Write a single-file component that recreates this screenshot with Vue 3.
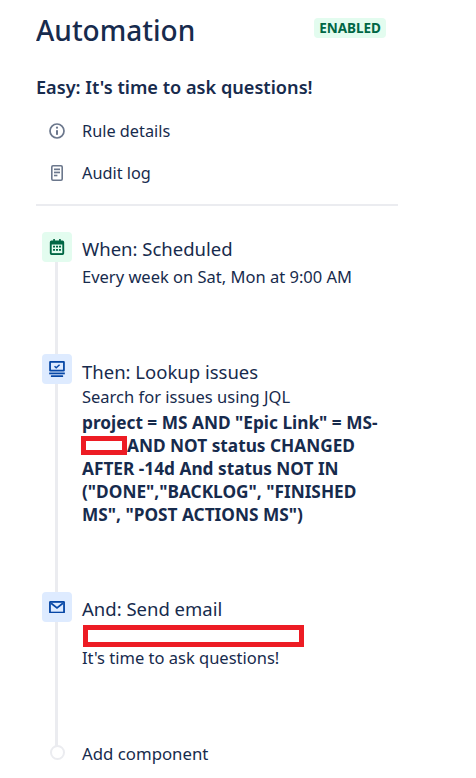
<script setup>
const menu = [
  { label: 'Rule details', icon: 'info' },
  { label: 'Audit log', icon: 'log' },
]
</script>

<template>
  <main class="panel">
    <header class="head">
      <h1>Automation</h1>
      <span class="lozenge">ENABLED</span>
    </header>
    <h2>Easy: It's time to ask questions!</h2>
    <nav class="menu">
      <div v-for="m in menu" :key="m.label" class="menu-row">
        <svg v-if="m.icon === 'info'" class="menu-icon" viewBox="0 0 18 18" width="18" height="18">
          <circle cx="9" cy="9" r="7" fill="none" stroke="#6b778c" stroke-width="1.7" />
          <rect x="8" y="8" width="2" height="5" rx=".8" fill="#6b778c" />
          <circle cx="9" cy="5.7" r="1.1" fill="#6b778c" />
        </svg>
        <svg v-else class="menu-icon" viewBox="0 0 18 18" width="18" height="18">
          <rect x="3.8" y="1.8" width="10.4" height="14.4" rx="1.2" fill="none" stroke="#6b778c" stroke-width="1.6" />
          <rect x="6" y="4.5" width="6" height="1.7" fill="#6b778c" />
          <rect x="6" y="7.6" width="6" height="1.7" fill="#6b778c" />
          <rect x="6" y="10.7" width="3.4" height="1.6" fill="#6b778c" />
        </svg>
        <span>{{ m.label }}</span>
      </div>
    </nav>
    <hr />
    <section class="timeline">
      <div class="rail"></div>
      <div class="step step-when">
        <div class="badge green">
          <svg viewBox="1.5 1 13 14.5" width="16" height="16">
            <path d="M3 2.4h1.6V1h1.5v1.4h3.8V1h1.5v1.4H13a1.5 1.5 0 0 1 1.5 1.5V14a1.5 1.5 0 0 1-1.5 1.5H3A1.5 1.5 0 0 1 1.500 14V3.900A1.500 1.500 0 0 1 3 2.400z" fill="#006644" />
            <rect x="3.200" y="6" width="9.600" height="7.800" fill="#e3fcef" />
            <path d="M4.400 7.200h1.800v1.600H4.400zM7.100 7.200h1.800v1.600H7.100zM9.800 7.200h1.800v1.600H9.800zM4.400 10.100h1.800v1.600H4.400zM7.100 10.100h1.800v1.600H7.100zM9.800 10.100h1.800v1.600H9.800z" fill="#006644" />
          </svg>
        </div>
        <div class="body">
          <div class="title">When: Scheduled</div>
          <div class="line">Every week on Sat, Mon at 9:00 AM</div>
        </div>
      </div>
      <div class="step step-then">
        <div class="badge blue">
          <svg viewBox="1 1 14 14.300" width="16" height="16">
            <rect x="1" y="1" width="14" height="9.400" rx="1" fill="#0747a6" />
            <rect x="2.600" y="2.600" width="10.800" height="6.200" fill="#deebff" />
            <path d="M5.800 5.700l1.500 1.400 3-2.700" fill="none" stroke="#0747a6" stroke-width="1.300" />
            <rect x="1" y="11.300" width="14" height="1.600" fill="#0747a6" />
            <rect x="2.500" y="13.700" width="11" height="1.600" rx=".5" fill="#0747a6" />
          </svg>
        </div>
        <div class="body">
          <div class="title">Then: Lookup issues</div>
          <div class="line search">Search for issues using JQL</div>
          <div class="jql">project = MS AND "Epic Link" = MS-<br /><span class="redact short"></span>AND NOT status CHANGED<br />AFTER -14d And status NOT IN<br />("DONE","BACKLOG", "FINISHED<br />MS", "POST ACTIONS MS")</div>
        </div>
      </div>
      <div class="step step-and">
        <div class="badge blue">
          <svg viewBox="1 2.500 14 11" width="16" height="12.500">
            <rect x="1" y="2.500" width="14" height="11" rx="1.200" fill="#0747a6" />
            <rect x="2.600" y="4.100" width="10.800" height="7.800" fill="#deebff" />
            <path d="M2.800 4.500L8 8.600l5.200-4.100" fill="none" stroke="#0747a6" stroke-width="1.500" />
          </svg>
        </div>
        <div class="body">
          <div class="title">And: Send email</div>
          <div class="redact long"></div>
          <div class="line">It's time to ask questions!</div>
        </div>
      </div>
      <div class="step step-add">
        <div class="dot-wrap"><div class="dot"></div></div>
        <div class="add">Add component</div>
      </div>
    </section>
  </main>
</template>

<style scoped>
.panel {
  width: 362px;
  height: 778px;
  overflow: hidden;
  margin-left: 36px;
  box-sizing: border-box;
  padding-top: 11px;
  font-family: "Noto Sans", "Open Sans", sans-serif;
  color: #172b4d;
  font-size: 16.500px;
}
.head {
  display: flex;
  justify-content: space-between;
  align-items: flex-start;
  height: 40px;
}
h1 {
  margin: 0;
  font-size: 28px;
  line-height: 38px;
  font-weight: 500;
  color: #172b4d;
}
.lozenge {
  margin: 7px 12px 0 0;
  padding: 0 5px;
  height: 20px;
  line-height: 20px;
  border-radius: 4px;
  background: #e3fcef;
  color: #006644;
  font-size: 13.500px;
  font-weight: 700;
}
h2 {
  margin: 23px 0 0;
  font-size: 18.150px;
  line-height: 26px;
  font-weight: 600;
}
.menu {
  margin-top: 10px;
  padding-left: 12px;
}
.menu-row {
  display: flex;
  align-items: center;
  gap: 16px;
  height: 42px;
  font-size: 16.300px;
}
.menu-icon {
  flex: none;
}
hr {
  border: 0;
  height: 2px;
  background: #ebecf0;
  margin: 10px 0 0;
}
.timeline {
  position: relative;
  margin-top: 26px;
  padding-left: 6px;
}
.rail {
  position: absolute;
  left: 19px;
  top: 20px;
  width: 3px;
  height: 500px;
  background: #ebecf0;
}
.step {
  position: relative;
  display: flex;
  gap: 10px;
}
.step-when { height: 122px; }
.step-then { height: 238px; }
.step-and { height: 153px; }
.badge {
  flex: none;
  width: 30px;
  height: 30px;
  border-radius: 4px;
  display: flex;
  align-items: center;
  justify-content: center;
}
.green { background: #e3fcef; }
.blue { background: #deebff; }
.title {
  font-size: 18.500px;
  line-height: 35px;
}
.step-when .title,
.step-and .title {
  line-height: 34px;
}
.line {
  line-height: 22px;
}
.search {
  margin-top: -3px;
}
.jql {
  font-size: 17.250px;
  font-weight: 700;
  line-height: 23px;
  margin-top: 3px;
}
.redact {
  box-sizing: border-box;
  border: 5px solid #ed1c24;
  background: #fff;
}
.short {
  display: inline-block;
  width: 46px;
  height: 19px;
  margin-left: -1px;
  vertical-align: -3px;
}
.long {
  width: 221px;
  height: 22px;
  margin-top: -1px;
  margin-left: 1px;
}
.dot-wrap {
  flex: none;
  width: 30px;
  display: flex;
  justify-content: center;
}
.dot {
  box-sizing: border-box;
  width: 15px;
  height: 15px;
  border-radius: 50%;
  border: 2px solid #ebecf0;
  background: #fff;
}
.add {
  font-size: 16.800px;
  line-height: 18px;
}
</style>
